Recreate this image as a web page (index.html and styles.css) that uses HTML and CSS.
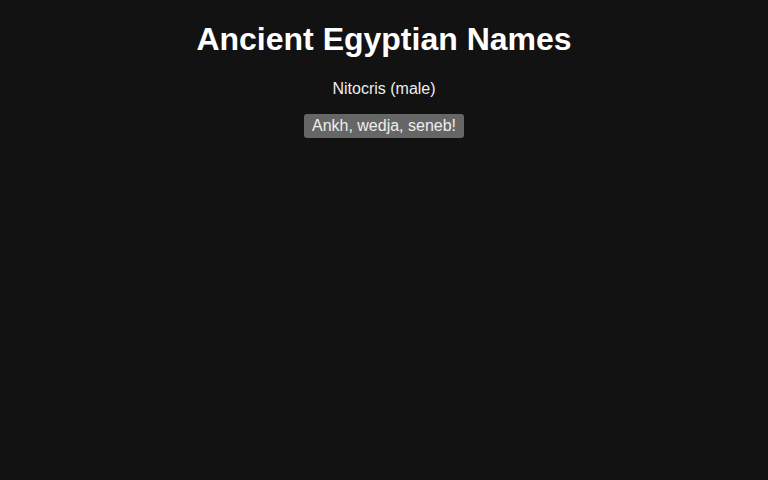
FILE: index.html
```html
<!DOCTYPE html>
<html>
<head>
<meta charset="utf-8">
<link rel="stylesheet" href="styles.css">
</head>
<body class="page">
<div class="app">
  <h1 class="title">Ancient Egyptian Names</h1>
  <p class="name">Nitocris (male)</p>
  <button class="btn">Ankh, wedja, seneb!</button>
</div>
</body>
</html>
```
FILE: styles.css
```css
html, body {
  background: #121212;
}
.page {
  margin: 0;
  padding: 0 8px;
  color: #ffffff;
  font-family: "Liberation Sans", Arial, sans-serif;
}
.app {
  text-align: center;
}
.title {
  font-size: 32px;
  font-weight: bold;
  margin: 21.44px 0;
}
.name {
  font-size: 16px;
  margin: 16px 0;
  color: #eeeeee;
}
.btn {
  font-family: "Liberation Sans", Arial, sans-serif;
  font-size: 16px;
  color: #eeeeee;
  background: #666666;
  border: none;
  border-radius: 3px;
  padding: 3px 8px;
}
```
